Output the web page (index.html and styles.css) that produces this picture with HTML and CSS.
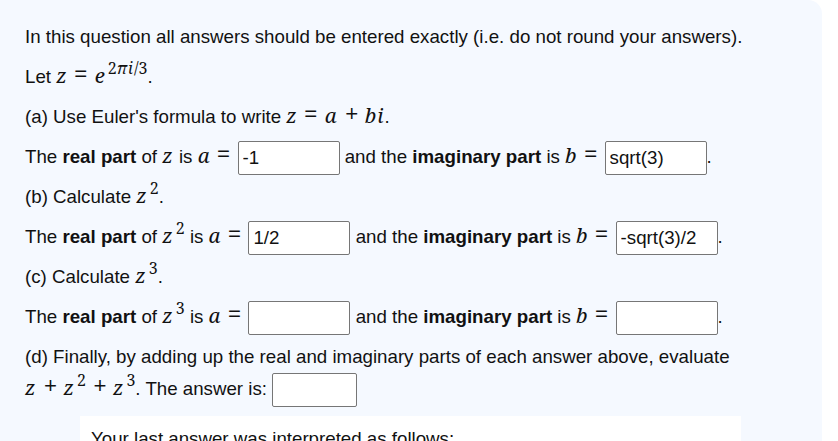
FILE: index.html
```html
<!DOCTYPE html>
<html lang="en">
<head>
  <meta charset="UTF-8">
  <meta name="viewport" content="width=device-width, initial-scale=1.0">
  <title>Complex numbers question</title>
  <link rel="stylesheet" href="styles.css">
</head>
<body>
  <div class="question">
    <p>In this question all answers should be entered exactly (i.e. do not round your answers).</p>
    <p>Let <span class="m"><i>z</i><span class="rel">=</span><i>e</i><sup>2<i>π</i><i>i</i>/3</sup></span>.</p>
    <p>(a) Use Euler's formula to write <span class="m"><i>z</i><span class="rel">=</span><i>a</i><span class="bin">+</span><i>b</i><i>i</i></span>.</p>
    <p>The <b>real part</b> of <span class="m"><i>z</i></span> is <span class="m"><i>a</i><span class="rel">=</span></span><input class="ans" type="text" value="-1"> and the <b>imaginary part</b> is <span class="m"><i>b</i><span class="rel">=</span></span><input class="ans" type="text" value="sqrt(3)">.</p>
    <p>(b) Calculate <span class="m"><i>z</i><sup>2</sup></span>.</p>
    <p>The <b>real part</b> of <span class="m"><i>z</i><sup>2</sup></span> is <span class="m"><i>a</i><span class="rel">=</span></span><input class="ans" type="text" value="1/2"> and the <b>imaginary part</b> is <span class="m"><i>b</i><span class="rel">=</span></span><input class="ans" type="text" value="-sqrt(3)/2">.</p>
    <p>(c) Calculate <span class="m"><i>z</i><sup>3</sup></span>.</p>
    <p>The <b>real part</b> of <span class="m"><i>z</i><sup>3</sup></span> is <span class="m"><i>a</i><span class="rel">=</span></span><input class="ans" type="text" value=""> and the <b>imaginary part</b> is <span class="m"><i>b</i><span class="rel">=</span></span><input class="ans" type="text" value="">.</p>
    <p>(d) Finally, by adding up the real and imaginary parts of each answer above, evaluate <span class="m"><i>z</i><span class="bin">+</span><i>z</i><sup>2</sup><span class="bin">+</span><i>z</i><sup>3</sup></span>. The answer is: <input class="ans short" type="text" value=""></p>
    <div class="feedback">Your last answer was interpreted as follows:</div>
  </div>
</body>
</html>
```

FILE: styles.css
```css
/* Page */
body {
  margin: 0;
  background-color: #fff;
  font-family: "Liberation Sans", Arial, sans-serif;
  font-size: 18.72px;
  color: #111;
}

.question {
  width: 797px;
  height: 441px;
  padding: 21px 0 0 25px;
  background-color: #f5f9ff;
  border-top-right-radius: 14px;
  overflow: hidden;
}

.question p {
  margin: 0 0 8px;
  line-height: 32px;
}

/* Math */
.m {
  font-family: "Noto Serif", "Liberation Serif", serif;
  font-size: 20.5px;
  line-height: 20px;
}

.m i {
  font-style: italic;
  padding-right: 1px;
}

.m sup {
  font-size: 16px;
  line-height: 0;
  vertical-align: 9px;
  margin-left: 2px;
}

.m .rel {
  font-style: normal;
  font-size: 25px;
  margin: 0 7px 0 6px;
}

.m .bin {
  font-style: normal;
  font-size: 25px;
  margin: 0 6px 0 7px;
}

/* Answer boxes */
.ans {
  box-sizing: border-box;
  width: 102px;
  height: 34px;
  margin: -2px 0;
  padding: 0 4px;
  vertical-align: middle;
  border: 1px solid #767676;
  border-radius: 2px;
  background-color: #fff;
  font-family: "Liberation Sans", Arial, sans-serif;
  font-size: 18.72px;
  color: #111;
}

.ans.short {
  width: 85px;
}

/* Feedback box */
.feedback {
  width: 650px;
  margin: 11px 0 0 55px;
  padding: 12px 0 0 11px;
  height: 40px;
  background-color: #fff;
}
```
